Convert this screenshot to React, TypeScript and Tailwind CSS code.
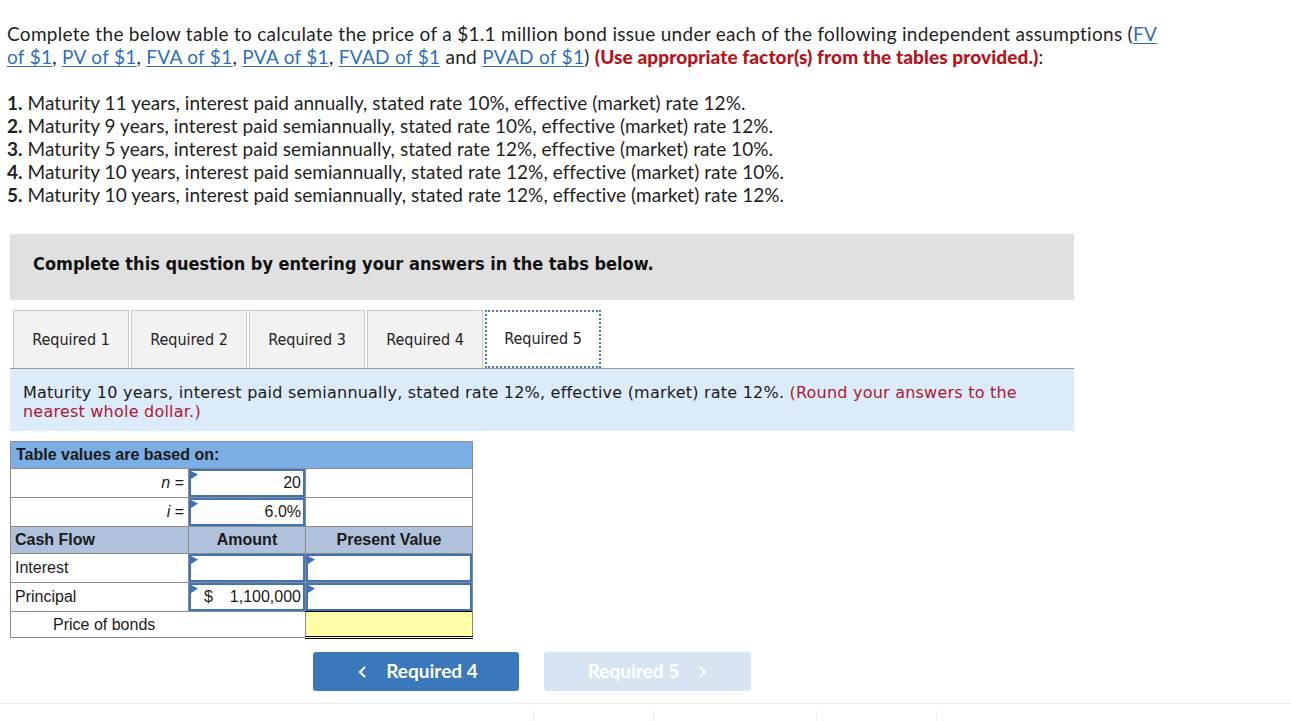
import React from "react";

const top = { fontFamily: "Lato, 'Open Sans', sans-serif" };
const verd = { fontFamily: "'DejaVu Sans', Verdana, sans-serif" };
const cond = { fontFamily: "'DejaVu Sans Condensed', 'DejaVu Sans', sans-serif", fontStretch: "condensed" as const };
const arial = { fontFamily: "'Liberation Sans', Arial, sans-serif" };

function Tri() {
  return (
    <svg className="absolute left-0 top-0" width="7" height="8" viewBox="0 0 7 8">
      <polygon points="0,0 7,3.5 0,8" fill="#3a72c0" />
    </svg>
  );
}

function Input({ children }: { children?: React.ReactNode }) {
  return (
    <div className="relative h-full w-full border-2 border-[#3f73b5] bg-white flex items-center justify-end pr-[2px]">
      <Tri />
      {children}
    </div>
  );
}

const cell = "border border-[#8c8c8c] p-0";

export default function App() {
  const tabs = ["Required 1", "Required 2", "Required 3", "Required 4", "Required 5"];
  const items = [
    "Maturity 11 years, interest paid annually, stated rate 10%, effective (market) rate 12%.",
    "Maturity 9 years, interest paid semiannually, stated rate 10%, effective (market) rate 12%.",
    "Maturity 5 years, interest paid semiannually, stated rate 12%, effective (market) rate 10%.",
    "Maturity 10 years, interest paid semiannually, stated rate 12%, effective (market) rate 10%.",
    "Maturity 10 years, interest paid semiannually, stated rate 12%, effective (market) rate 12%.",
  ];
  const link = "text-[#2f6fb7] underline underline-offset-2 decoration-1";
  return (
    <div className="min-h-[721px] bg-white relative overflow-hidden">
      <div className="px-[7px] pt-[22px]">
        <p className="text-[19px] leading-[23px] tracking-[0.3px] text-[#1f1f1f]" style={top}>
          Complete the below table to calculate the price of a $1.1 million bond issue under each of the following independent assumptions (
          <span className={link}>FV</span>
          <br />
          <span className={link}>of $1</span>, <span className={link}>PV of $1</span>, <span className={link}>FVA of $1</span>,{" "}
          <span className={link}>PVA of $1</span>, <span className={link}>FVAD of $1</span> and{" "}
          <span className={link}>PVAD of $1</span>){" "}
          <span className="font-black tracking-[0.1px] text-[#b5121b]">(Use appropriate factor(s) from the tables provided.)</span>:
        </p>
        <div className="mt-[23px] text-[19px] leading-[23px] tracking-[0.05px] text-[#1f1f1f]" style={top}>
          {items.map((t, i) => (
            <div key={i}>
              <span className="font-bold">{i + 1}.</span> {t}
            </div>
          ))}
        </div>

        <div className="ml-[3px] w-[1064px] mt-[28px]">
          <div className="h-[66px] bg-[#e0e0e0] flex items-center pl-[23px] pb-[8px]">
            <span className="text-[18px] font-bold text-[#111]" style={cond}>
              Complete this question by entering your answers in the tabs below.
            </span>
          </div>

          <div className="mt-[10px] flex gap-[2px] pl-[3px] border-b border-[#999]">
            {tabs.map((t, i) => (
              <div
                key={t}
                className={
                  "w-[116px] h-[58px] flex items-center justify-center text-[16px] text-[#222] " +
                  (i === 4
                    ? "bg-white border-2 border-dotted border-[#4a78bd] -mb-px"
                    : "bg-[#f2f2f2] border border-b-0 border-[#c8c8c8]")
                }
                style={cond}
              >
                {t}
              </div>
            ))}
          </div>

          <div
            className="bg-[#dbebf9] pl-[13px] pr-[40px] pt-[14px] pb-[10px] text-[16px] leading-[19px] tracking-[0.22px] text-[#1a1a1a]"
            style={verd}
          >
            Maturity 10 years, interest paid semiannually, stated rate 12%, effective (market) rate 12%.{" "}
            <span className="text-[#b01730]">(Round your answers to the nearest whole dollar.)</span>
          </div>

          <table className="mt-[10px] border-collapse text-[16px] text-[#1a1a1a]" style={arial}>
            <colgroup>
              <col className="w-[178px]" />
              <col className="w-[117px]" />
              <col className="w-[167px]" />
            </colgroup>
            <tbody>
              <tr className="h-[27px]">
                <td colSpan={3} className={cell + " bg-[#7aaee4] font-bold px-[5px]"}>
                  Table values are based on:
                </td>
              </tr>
              <tr className="h-[29px]">
                <td className={cell + " text-right pr-[4px]"}>
                  <i>n</i> =
                </td>
                <td className={cell + " h-[29px]"}>
                  <Input>20</Input>
                </td>
                <td className={cell}></td>
              </tr>
              <tr className="h-[29px]">
                <td className={cell + " text-right pr-[4px]"}>
                  <i>i</i> =
                </td>
                <td className={cell + " h-[29px]"}>
                  <Input>6.0%</Input>
                </td>
                <td className={cell}></td>
              </tr>
              <tr className="h-[27px] bg-[#b0c1dc] font-bold">
                <td className={cell + " px-[4px]"}>Cash Flow</td>
                <td className={cell + " text-center"}>Amount</td>
                <td className={cell + " text-center"}>Present Value</td>
              </tr>
              <tr className="h-[29px]">
                <td className={cell + " px-[4px]"}>Interest</td>
                <td className={cell + " h-[29px]"}>
                  <Input />
                </td>
                <td className={cell + " h-[29px]"}>
                  <Input />
                </td>
              </tr>
              <tr className="h-[28px]">
                <td className={cell + " px-[4px]"}>Principal</td>
                <td className={cell + " h-[28px]"}>
                  <div className="relative h-full w-full border-2 border-[#3f73b5] bg-white flex items-center justify-between pl-[13px] pr-[2px]">
                    <Tri />
                    <span>$</span>
                    <span>1,100,000</span>
                  </div>
                </td>
                <td className={cell + " h-[28px]"}>
                  <Input />
                </td>
              </tr>
              <tr className="h-[26px]">
                <td colSpan={2} className={cell + " pl-[42px]"}>
                  Price of bonds
                </td>
                <td className="p-0 border-l border-r border-[#8c8c8c] border-t border-t-black border-b-[3px] border-b-black border-double bg-[#ffffa8]"></td>
              </tr>
            </tbody>
          </table>

          <div className="mt-[13px] ml-[303px] flex gap-[25px]" style={top}>
            <div className="w-[206px] h-[39px] rounded-[3px] bg-[#3a77bb] flex items-center justify-center gap-[18px] pl-[4px] text-white font-bold text-[19px]">
              <svg width="10" height="14" viewBox="0 0 10 14">
                <polyline points="7,2 2,7 7,12" fill="none" stroke="white" strokeWidth="2" />
              </svg>
              <span>Required 4</span>
            </div>
            <div className="w-[207px] h-[39px] rounded-[3px] bg-[#d7e4f2] flex items-center justify-center gap-[18px] text-white font-bold text-[19px]">
              <span>Required 5</span>
              <svg width="10" height="14" viewBox="0 0 10 14">
                <polyline points="3,2 8,7 3,12" fill="none" stroke="white" strokeWidth="2" />
              </svg>
            </div>
          </div>
        </div>
      </div>
      <div className="mt-[12px] border-t border-[#ececec] h-[20px] relative">
        <div className="absolute top-[6px] left-[533px] w-px h-[14px] bg-[#ececec]" />
        <div className="absolute top-[6px] left-[653px] w-px h-[14px] bg-[#ececec]" />
        <div className="absolute top-[6px] left-[816px] w-px h-[14px] bg-[#ececec]" />
        <div className="absolute top-[6px] left-[936px] w-px h-[14px] bg-[#ececec]" />
      </div>
    </div>
  );
}
